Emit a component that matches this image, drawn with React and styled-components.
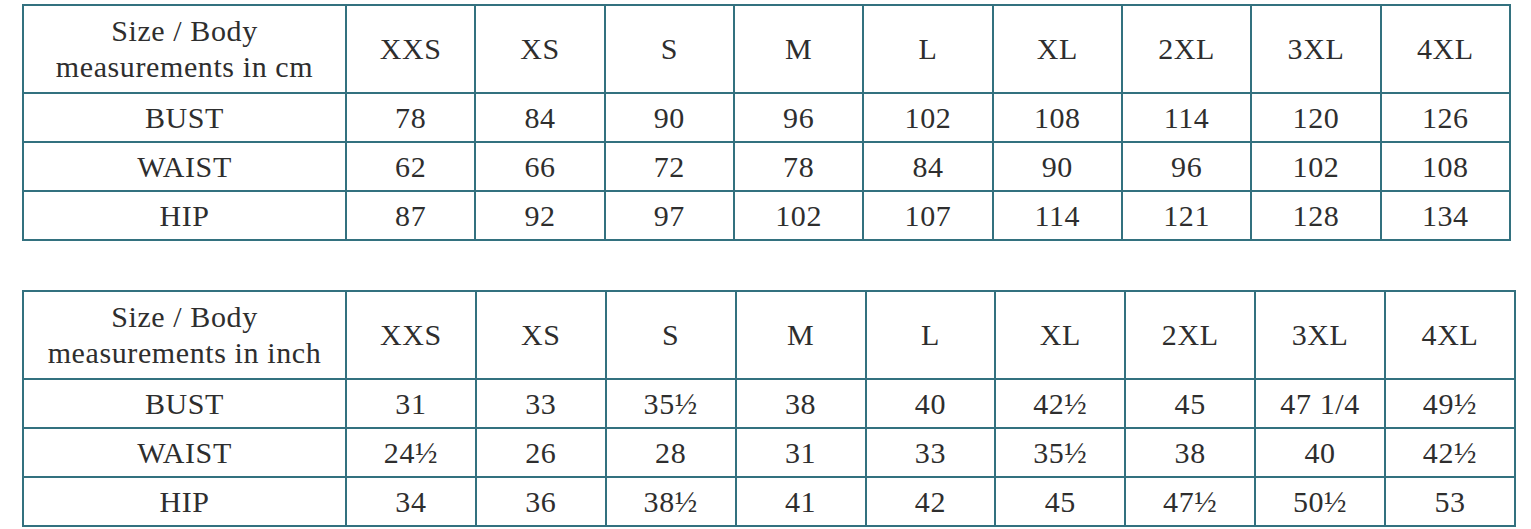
import React from "react";
import styled, { createGlobalStyle } from "styled-components";

const GlobalStyle = createGlobalStyle`
  html, body {
    margin: 0;
    padding: 0;
    background: #ffffff;
  }
`;

const Page = styled.div`
  display: flex;
  flex-direction: column;
  gap: 49px;
  padding: 4px 0 0 22px;
  font-family: "Liberation Serif", "DejaVu Serif", serif;
  color: #2e2e2e;
`;

const Table = styled.table`
  border-collapse: collapse;
  table-layout: fixed;
  width: ${(p) => p.$width}px;
  border: 2px solid #33717f;
`;

const Cell = styled.td`
  border: 2px solid #33717f;
  padding: 0;
  text-align: center;
  vertical-align: middle;
  font-size: 30px;
  line-height: 36px;
  letter-spacing: 0.6px;
  height: ${(p) => (p.$head ? 86 : 47)}px;
  white-space: nowrap;
`;

const FirstCol = styled.col`
  width: 323px;
`;

const sizes = ["XXS", "XS", "S", "M", "L", "XL", "2XL", "3XL", "4XL"];

const cmRows = [
  ["BUST", "78", "84", "90", "96", "102", "108", "114", "120", "126"],
  ["WAIST", "62", "66", "72", "78", "84", "90", "96", "102", "108"],
  ["HIP", "87", "92", "97", "102", "107", "114", "121", "128", "134"],
];

const inchRows = [
  ["BUST", "31", "33", "35½", "38", "40", "42½", "45", "47 1/4", "49½"],
  ["WAIST", "24½", "26", "28", "31", "33", "35½", "38", "40", "42½"],
  ["HIP", "34", "36", "38½", "41", "42", "45", "47½", "50½", "53"],
];

const SizeTable = ({ unit, rows, width }) => (
  <Table $width={width}>
    <colgroup>
      <FirstCol />
      {sizes.map((s) => (
        <col key={s} />
      ))}
    </colgroup>
    <tbody>
      <tr>
        <Cell $head>
          Size / Body
          <br />
          measurements in {unit}
        </Cell>
        {sizes.map((s) => (
          <Cell key={s} $head>
            {s}
          </Cell>
        ))}
      </tr>
      {rows.map((row) => (
        <tr key={row[0]}>
          {row.map((v, i) => (
            <Cell key={i}>{v}</Cell>
          ))}
        </tr>
      ))}
    </tbody>
  </Table>
);

export default function App() {
  return (
    <>
      <GlobalStyle />
      <Page>
        <SizeTable unit="cm" rows={cmRows} width={1489} />
        <SizeTable unit="inch" rows={inchRows} width={1494} />
      </Page>
    </>
  );
}
